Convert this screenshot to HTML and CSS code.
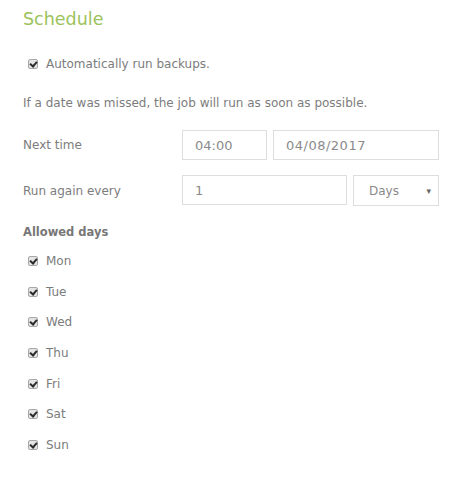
FILE: index.html
```html
<!DOCTYPE html>
<html>
<head>
<meta charset="utf-8">
<link rel="stylesheet" href="styles.css">
</head>
<body>
<div class="page">
  <h1 class="title">Schedule</h1>
  <div class="check-row auto"><span class="box"></span><span>Automatically run backups.</span></div>
  <p class="note">If a date was missed, the job will run as soon as possible.</p>
  <div class="field-row">
    <span class="label">Next time</span>
    <div class="controls">
      <div class="input time">04:00</div>
      <div class="input date">04/08/2017</div>
    </div>
  </div>
  <div class="field-row second">
    <span class="label">Run again every</span>
    <div class="controls">
      <div class="input count">1</div>
      <div class="input select"><span>Days</span><span class="arrow">&#9662;</span></div>
    </div>
  </div>
  <div class="days-title">Allowed days</div>
  <div class="days">
    <div class="check-row day"><span class="box"></span><span>Mon</span></div>
    <div class="check-row day"><span class="box"></span><span>Tue</span></div>
    <div class="check-row day"><span class="box"></span><span>Wed</span></div>
    <div class="check-row day"><span class="box"></span><span>Thu</span></div>
    <div class="check-row day"><span class="box"></span><span>Fri</span></div>
    <div class="check-row day"><span class="box"></span><span>Sat</span></div>
    <div class="check-row day"><span class="box"></span><span>Sun</span></div>
  </div>
</div>
</body>
</html>
```
FILE: styles.css
```css
html, body {
  margin: 0;
  padding: 0;
  background: #fff;
}
body {
  font-family: "DejaVu Sans", sans-serif;
  font-size: 12px;
  color: #7c7c7c;
}
.page {
  padding: 5px 0 0 23px;
  width: 416px;
}
.title {
  margin: 0;
  height: 28px;
  line-height: 28px;
  font-size: 17.5px;
  font-weight: normal;
  color: #9cc25c;
}
.check-row {
  display: flex;
  align-items: center;
  height: 20px;
  padding-left: 5px;
}
.check-row.auto {
  margin-top: 21px;
}
.box {
  position: relative;
  box-sizing: border-box;
  width: 10px;
  height: 10px;
  margin-right: 8px;
  border: 1px solid #a8a8a8;
  border-radius: 2px;
  background: #e4e4e4;
  flex: none;
}
.box::after {
  content: "";
  position: absolute;
  left: 2px;
  top: 0px;
  width: 3px;
  height: 5px;
  border-right: 2px solid #2a2a2a;
  border-bottom: 2px solid #2a2a2a;
  transform: rotate(40deg);
}
.note {
  margin: 19px 0 0;
  height: 20px;
  line-height: 20px;
}
.field-row {
  display: flex;
  align-items: center;
  margin-top: 17px;
}
.field-row.second {
  margin-top: 15px;
}
.label {
  width: 159px;
  flex: none;
}
.controls {
  display: flex;
  gap: 6px;
}
.input {
  box-sizing: border-box;
  height: 30px;
  border: 1px solid #dedede;
  display: flex;
  align-items: center;
  padding-left: 12px;
  color: #8a8a8a;
  font-size: 13px;
}
.time { width: 85px; }
.date { width: 166px; letter-spacing: 0.5px; }
.count { width: 165px; }
.select {
  width: 86px;
  height: 31px;
  justify-content: space-between;
  padding-right: 7px;
  padding-left: 15px;
  font-size: 12px;
}
.arrow {
  font-size: 9px;
  color: #666;
}
.days-title {
  margin-top: 16px;
  height: 20px;
  line-height: 20px;
  font-weight: bold;
  font-size: 11.5px;
  color: #777;
}
.days {
  display: flex;
  flex-direction: column;
  gap: 10.7px;
  margin-top: 9px;
}
```
